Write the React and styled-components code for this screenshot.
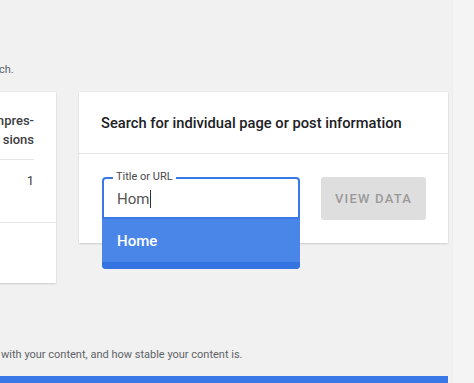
import React from "react";
import styled, {createGlobalStyle} from "styled-components";

const GlobalStyle = createGlobalStyle`
  html, body {
    margin: 0;
    padding: 0;
    background: #f1f1f1;
    overflow: hidden;
  }
  body {
    font-family: Roboto, "Liberation Sans", Arial, sans-serif;
  }
`;

const Shell = styled.div`
  display: flex;
  height: 383px;
`;

const Main = styled.div`
  width: 452px;
  overflow: hidden;
`;

const Gutter = styled.div`
  flex: 1;
  background: #f4f4f4;
  border-left: 1px solid #ededed;
`;

const Page = styled.div`
  width: 748px;
  margin-left: -300px;
  padding-top: 62px;
`;

const Note = styled.p`
  margin: 0;
  font-size: 11px;
  line-height: 16px;
  color: #5f6368;
  white-space: nowrap;
`;

const CardRow = styled.div`
  display: flex;
  align-items: flex-start;
  gap: 23px;
  margin: 14px 0 64px;
`;

const Card = styled.div`
  background: #fff;
  box-shadow: 0 1px 2px rgba(0, 0, 0, 0.14), 0 0 1px rgba(0, 0, 0, 0.08);
  width: ${p => p.$width}px;
  position: relative;
`;

const Table = styled.div`
  padding: 0 22px;
`;

const HeadRow = styled.div`
  display: grid;
  grid-template-columns: 1fr 70px 60px;
  height: 68px;
  padding-top: 19px;
  box-sizing: border-box;
  border-bottom: 1px solid #e4e4e4;
`;

const HeadCell = styled.div`
  font-size: 13px;
  font-weight: 500;
  line-height: 19px;
  color: #3c4043;
  text-align: ${p => p.$align || "right"};
  hyphens: manual;
  padding-left: 8px;
`;

const BodyRow = styled.div`
  display: grid;
  grid-template-columns: 1fr 70px 60px;
  height: 62px;
  padding-top: 12px;
  box-sizing: border-box;
`;

const Cell = styled.div`
  font-size: 13px;
  line-height: 18px;
  color: #3c4043;
  text-align: ${p => p.$align || "right"};
`;

const CardFoot = styled.div`
  height: 60px;
  border-top: 1px solid #e4e4e4;
`;

const CardHeader = styled.div`
  height: 61px;
  display: flex;
  align-items: center;
  padding: 0 22px;
  border-bottom: 1px solid #e4e4e4;
  font-size: 14.7px;
  font-weight: 500;
  color: #202124;
`;

const CardBody = styled.div`
  display: flex;
  align-items: flex-start;
  gap: 21px;
  padding: 23px 22px 23px 23px;
`;

const FieldWrap = styled.div`
  position: relative;
  width: 198px;
`;

const Field = styled.div`
  height: 42px;
  box-sizing: border-box;
  border: 2px solid #3b78e7;
  border-radius: 4px 4px 0 0;
  display: flex;
  align-items: center;
  padding: 2px 0 0 13px;
  font-size: 15px;
  color: #555;
`;

const Caret = styled.span`
  display: inline-block;
  width: 1px;
  height: 18px;
  background: #333;
  margin-left: 1px;
`;

const FieldLabel = styled.span`
  position: absolute;
  top: -7px;
  left: 11px;
  padding: 0 3px;
  background: #fff;
  font-size: 11px;
  line-height: 13px;
  color: #4a4a4a;
`;

const Menu = styled.div`
  position: absolute;
  top: 42px;
  left: 0;
  right: 0;
  background: #4a86e8;
  border-radius: 0 0 4px 4px;
  overflow: hidden;
  z-index: 2;
`;

const Option = styled.div`
  height: 43px;
  display: flex;
  align-items: center;
  padding-left: 15px;
  font-size: 15px;
  font-weight: 500;
  color: #fff;
`;

const MenuEdge = styled.div`
  height: 7px;
  background: #3574e0;
`;

const Button = styled.button`
  flex: 0 0 105px;
  height: 43px;
  border: none;
  border-radius: 3px;
  background: #dedede;
  color: #9a9a9a;
  font-family: inherit;
  font-size: 13px;
  font-weight: 500;
  letter-spacing: 1.2px;
`;

const BlueBar = styled.div`
  width: 748px;
  height: 10px;
  margin-top: 13px;
  background: #3b78e7;
`;

const App = () => {
    return (
        <>
            <GlobalStyle/>
            <Shell>
                <Main>
                    <Page>
                        <Note>Look up how any individual page or post is performing in search.</Note>
                        <CardRow>
                            <Card $width={356}>
                                <Table>
                                    <HeadRow>
                                        <HeadCell $align="left">Page</HeadCell>
                                        <HeadCell>Clicks</HeadCell>
                                        <HeadCell>Impres&shy;sions</HeadCell>
                                    </HeadRow>
                                    <BodyRow>
                                        <Cell $align="left">Home</Cell>
                                        <Cell>0</Cell>
                                        <Cell>1</Cell>
                                    </BodyRow>
                                </Table>
                                <CardFoot/>
                            </Card>
                            <Card $width={369}>
                                <CardHeader>Search for individual page or post information</CardHeader>
                                <CardBody>
                                    <FieldWrap>
                                        <Field>Hom<Caret/></Field>
                                        <FieldLabel>Title or URL</FieldLabel>
                                        <Menu>
                                            <Option>Home</Option>
                                            <MenuEdge/>
                                        </Menu>
                                    </FieldWrap>
                                    <Button>VIEW DATA</Button>
                                </CardBody>
                            </Card>
                        </CardRow>
                        <Note>Core Web Vitals measure speed, how quickly you can interact with your content, and how stable your content is.</Note>
                        <BlueBar/>
                    </Page>
                </Main>
                <Gutter/>
            </Shell>
        </>
    );
}

export default App;
